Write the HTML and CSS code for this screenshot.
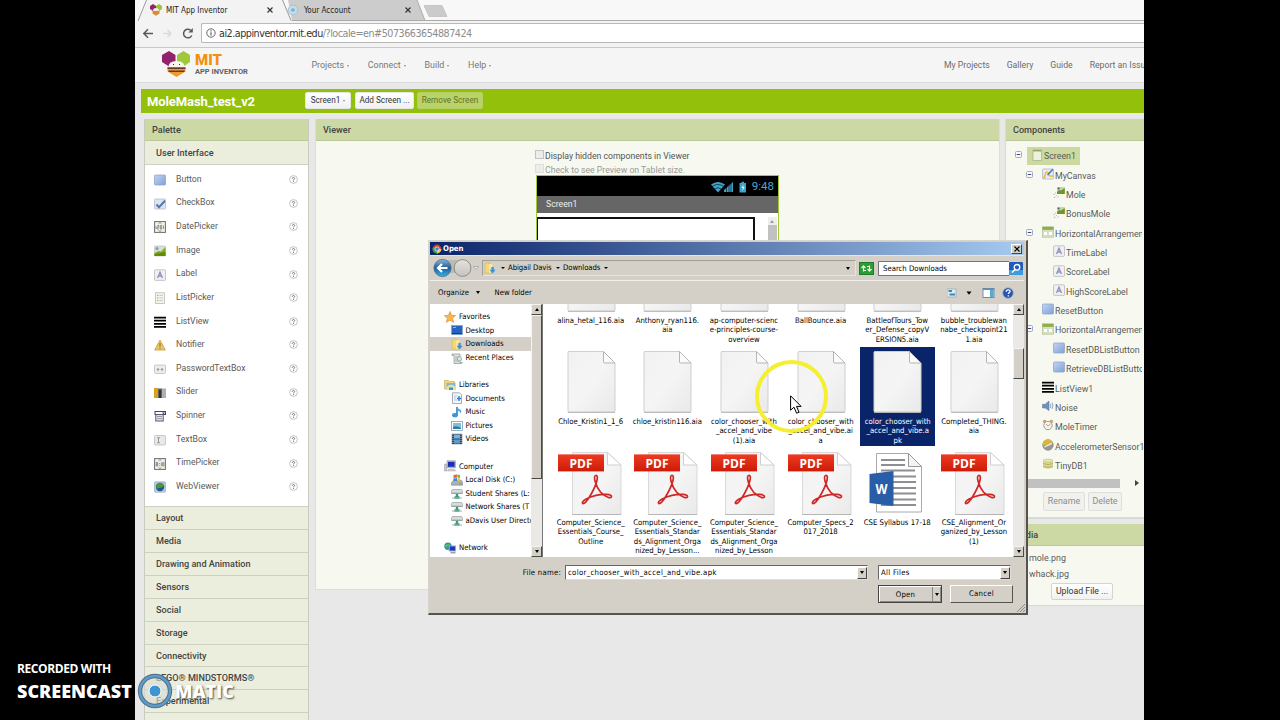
FILE: index.html
```html
<!DOCTYPE html>
<html lang="en">
<head>
<meta charset="utf-8">
<title>MIT App Inventor</title>
<link rel="stylesheet" href="styles.css">
</head>
<body>
<svg class="defs" aria-hidden="true">
  <defs>
    <linearGradient id="gBlue" x1="0" y1="0" x2="1" y2="1"><stop offset="0" stop-color="#c3d6f3"/><stop offset="1" stop-color="#7f9fd6"/></linearGradient>
    <linearGradient id="gPage" x1="0" y1="0" x2="1" y2="1"><stop offset="0" stop-color="#f1f1f1"/><stop offset=".5" stop-color="#f5f5f5"/><stop offset="1" stop-color="#e9e9e9"/></linearGradient>
    <linearGradient id="gRed" x1="0" y1="0" x2="0" y2="1"><stop offset="0" stop-color="#ee3a20"/><stop offset="1" stop-color="#cc1b08"/></linearGradient>
    <linearGradient id="gNav" x1="0" y1="0" x2="0" y2="1"><stop offset="0" stop-color="#8fb6d6"/><stop offset=".5" stop-color="#1c5f9c"/><stop offset="1" stop-color="#37b4e6"/></linearGradient>
    <linearGradient id="gOff" x1="0" y1="0" x2="0" y2="1"><stop offset="0" stop-color="#e4e2de"/><stop offset="1" stop-color="#c6c3bd"/></linearGradient>
  </defs>
  <symbol id="button" viewBox="0 0 12 12"><rect x=".5" y="1" width="11" height="10" rx="1" fill="url(#gBlue)" stroke="#8ea6d0" stroke-width=".8"/></symbol>
  <symbol id="check" viewBox="0 0 12 12"><rect x=".5" y="1" width="11" height="10" rx="1" fill="#dde4ef" stroke="#b5bdcb" stroke-width=".8"/><path d="M2.5 6.5 5 9.3 11 2.8" fill="none" stroke="#5278b5" stroke-width="2"/></symbol>
  <symbol id="date" viewBox="0 0 12 12"><rect x=".6" y=".6" width="10.8" height="10.8" fill="#f2f2ec" stroke="#6c6c6c"/><path d="M2 5v3M3.3 4.5h1.5v1.7H3.3V8h1.6M6.3 4.5v3.5h1.4V4.5ZM9.6 4.5V8M4.5 2.8 6 1.5l1.5 1.3M4.5 9.3 6 10.6l1.5-1.3" fill="none" stroke="#77776c" stroke-width=".8"/></symbol>
  <symbol id="image" viewBox="0 0 12 12"><rect x=".5" y="1" width="11" height="10" rx=".8" fill="#d5dfdf" stroke="#b6beb0" stroke-width=".6"/><path d="M.5 8 4.5 6 7 6.4 11.5 2v9H.5Z" fill="#86ad18"/><path d="M.5 9 11.5 7v4H.5Z" fill="#5f8c10"/><circle cx="3" cy="3.4" r="1.5" fill="#8d99a5"/></symbol>
  <symbol id="label" viewBox="0 0 12 12"><rect x=".5" y=".8" width="11" height="10.6" rx="1" fill="#f0f0f3" stroke="#b9b9c1" stroke-width=".8"/><path d="M3.5 9 6 3.2 8.5 9M4.5 7h3" fill="none" stroke="#9190bd" stroke-width="1.3"/></symbol>
  <symbol id="listpicker" viewBox="0 0 12 12"><rect x="1.5" y=".8" width="9" height="10.6" fill="#f4f4ec" stroke="#bcbcb0" stroke-width=".8"/><path d="M3 3.4h1.3M3 6h1.3M3 8.6h1.3" stroke="#92ad56"/><path d="M5.3 3.4H9M5.3 6H9M5.3 8.6H9" stroke="#bbb" stroke-width=".8"/></symbol>
  <symbol id="listview" viewBox="0 0 12 12"><path d="M0 1.6h12M0 4.7h12M0 7.8h12M0 10.9h12" stroke="#000" stroke-width="1.8"/></symbol>
  <symbol id="notifier" viewBox="0 0 12 12"><path d="M6 1 11.3 11H.7Z" fill="#efc55d" stroke="#c39a44" stroke-width=".8" stroke-linejoin="round"/><path d="M6 4v3.7M6 8.7V10" stroke="#8d7a3f" stroke-width="1.2"/></symbol>
  <symbol id="password" viewBox="0 0 12 12"><rect x=".5" y="2" width="11" height="8.5" rx="1" fill="#ececec" stroke="#bfbfbf" stroke-width=".8"/><circle cx="4" cy="6.4" r="1.2" fill="#999"/><circle cx="8" cy="6.4" r="1.2" fill="#999"/></symbol>
  <symbol id="slider" viewBox="0 0 12 12"><rect y="1" width="4" height="10" fill="#d7a21c"/><rect x="4" y="1.5" width="4" height="9.5" fill="#6b6355"/><rect x="5" y="3" width="2" height="8" fill="#333"/><rect x="8" y="1.5" width="4" height="9.5" fill="#b1b1b1"/></symbol>
  <symbol id="spinner" viewBox="0 0 12 12"><rect x="1" y="1.5" width="10.5" height="3" fill="#fff" stroke="#44445a"/><path d="M8 2.5h3l-1.5 2Z" fill="#3d3da0"/><rect x="1.8" y="4.6" width="7.4" height="6.4" fill="#eee" stroke="#55556a"/><path d="M3 6.6h5M3 8.7h5" stroke="#77778b" stroke-width=".8"/></symbol>
  <symbol id="textbox" viewBox="0 0 12 12"><rect x=".5" y="1.5" width="11" height="9.5" rx="1" fill="#e9e9e9" stroke="#bdbdbd" stroke-width=".8"/><path d="M3 3.8h3M3 8.7h3M4.5 3.8v4.9" stroke="#888" stroke-width=".8"/></symbol>
  <symbol id="time" viewBox="0 0 12 12"><rect x=".6" y=".6" width="10.8" height="10.8" fill="#f2f2ec" stroke="#6c6c6c"/><path d="M2.2 4.500h1.500V8H2.200ZM2.200 6.200h1.500M5.500 5v.8M5.500 7v.8M7.300 4.500V8M8.700 4.500h1.200V8H8.700ZM4.500 2.800 6 1.500l1.500 1.300M4.500 9.300 6 10.600l1.500-1.300" fill="none" stroke="#77776c" stroke-width=".8"/></symbol>
  <symbol id="web" viewBox="0 0 12 12"><rect x=".5" y=".8" width="11" height="10.4" rx="1" fill="#b6cae8" stroke="#90a5c5" stroke-width=".6"/><circle cx="6" cy="6" r="4.2" fill="#24598a"/><path d="M3 3.4C5 1 9 2 9.8 4.5 8 8 5 6 3 8 1.8 6 2 4.5 3 3.4Z" fill="#4f9a35"/></symbol>
  <symbol id="help" viewBox="0 0 9 9"><circle cx="4.5" cy="4.5" r="3.9" fill="#fff" stroke="#aaa" stroke-width=".7"/><path d="M3.2 3.7C3.3 2 5.8 2.2 5.6 3.7 5.4 4.5 4.5 4.4 4.5 5.4M4.5 6.1v.9" fill="none" stroke="#666" stroke-width=".9"/></symbol>
  <symbol id="screen" viewBox="0 0 12 12"><rect x="2" y="1" width="8.5" height="10.5" fill="#eef1dc" stroke="#a9b68b" stroke-width=".8"/><path d="M2 1.7h8.5" stroke="#92a86c" stroke-width="1.5"/></symbol>
  <symbol id="canvas" viewBox="0 0 12 12"><rect x=".6" y="1" width="10.8" height="10" rx="1" fill="#e9edf3" stroke="#a3b6cd" stroke-width=".8"/><path d="M1 10C5 10 1.5 4 5 4S4 9 11 8" fill="none" stroke="#efbd3b" stroke-width="1.6"/><path d="M5.5 7 11 1.2" stroke="#4776b4" stroke-width="1.5"/></symbol>
  <symbol id="sprite" viewBox="0 0 12 12"><rect x="4" y="0" width="7.8" height="7" fill="#c4d4b0"/><path d="M4 4.8 6.5 3 8 3.5 11.8 1v6H4Z" fill="#6f962d"/><circle cx="5.6" cy="1.5" r="1" fill="#555"/><path d="M.5 8 3 5.5M1 11 4 8M4.5 10.5 6 9" stroke="#9a9a9a" stroke-width=".8" stroke-dasharray="1.5 .8"/></symbol>
  <symbol id="horiz" viewBox="0 0 12 12"><rect x=".4" y=".8" width="11.2" height="10.4" fill="#d7dfc3" stroke="#aab98b" stroke-width=".6"/><path d="M.5 2.4h11" stroke="#8fae4b" stroke-width="3"/><rect x="2" y="6" width="3" height="3" fill="#fff"/><rect x="7" y="6" width="3" height="3" fill="#fff"/></symbol>
  <symbol id="sound" viewBox="0 0 12 12"><path d="M.5 4.3h2.7L7 1v9.6L3.2 8H.5Z" fill="#6f91bf" stroke="#527399" stroke-width=".5"/><path d="M8.4 4q1 2 0 4M10 2.5q1.7 3.2 0 6.6" fill="none" stroke="#97a8c0"/></symbol>
  <symbol id="clock" viewBox="0 0 12 12"><circle cx="2.7" cy="2.5" r="1.8" fill="#c9a36c"/><circle cx="9.3" cy="2.5" r="1.8" fill="#c9a36c"/><circle cx="6" cy="6.5" r="4.2" fill="#f5f3ee" stroke="#a59c8b"/><path d="M4 5l2 2 2.5-2" fill="none" stroke="#b5886b" stroke-width=".8"/></symbol>
  <symbol id="accel" viewBox="0 0 12 12"><circle cx="6" cy="6" r="5.3" fill="#979797" stroke="#777" stroke-width=".5"/><path d="M.8 6.5A5.2 5.2 0 0 1 10.7 3.5L6 6Z" fill="#d8b53c"/><path d="M2.5 8 10 4.3" stroke="#eee" stroke-width="1.3"/></symbol>
  <symbol id="db" viewBox="0 0 12 12"><path d="M1 2.8v6.7q5 2.4 10 0V2.8Z" fill="#d9d78f"/><ellipse cx="6" cy="2.7" rx="5" ry="1.5" fill="#ebe9b3" stroke="#bab76b" stroke-width=".6"/><path d="M1 5.5q5 2.3 10 0M1 8.3q5 2.3 10 0" fill="none" stroke="#aeab62" stroke-width=".8"/></symbol>
  <symbol id="fold" viewBox="0 0 7 7"><rect x=".5" y=".5" width="6" height="6" rx="1" fill="#f7f8fb" stroke="#9a9fbc" stroke-width=".9"/><path d="M1.8 3.5h3.4" stroke="#3f4380"/></symbol>

  <symbol id="star" viewBox="0 0 12 12"><path d="M6 .5 7.6 4.3 11.7 4.6 8.6 7.3 9.6 11.4 6 9.2 2.4 11.4 3.4 7.3.3 4.6 4.4 4.3Z" fill="#f9b74a" stroke="#e0872b" stroke-width=".6"/></symbol>
  <symbol id="desktop" viewBox="0 0 12 12"><rect x=".5" y="1.5" width="11" height="9" fill="#2762be" stroke="#83a5d1" stroke-width=".8"/><path d="M1 9.6h10" stroke="#123a76"/><path d="M2 3.4h3" stroke="#8cc1f2"/></symbol>
  <symbol id="downloads" viewBox="0 0 12 12"><path d="M1 1.5 5 .6V2h3v9H1Z" fill="#f3d878" stroke="#cfae4f" stroke-width=".5"/><path d="M5 2.2 8.5 1.5V10L5 11Z" fill="#f8e6a2"/><path d="M7.4 5h2.4v2.7H11.7L8.6 11.6 5.5 7.7h1.9Z" fill="#3c92d4"/></symbol>
  <symbol id="recent" viewBox="0 0 12 12"><path d="M1 2h8v8.5h2.5l-1 1H3V3.5H1Z" fill="#e2e5e2" stroke="#879394" stroke-width=".7"/><path d="M4 5h4M4 7h4M4 9h4" stroke="#98a6a8" stroke-width=".8"/><circle cx="8.5" cy="6.8" r="2.2" fill="#d9e8e7" stroke="#6d8f8b" stroke-width=".6"/></symbol>
  <symbol id="libraries" viewBox="0 0 12 12"><path d="M.5 1.5h4l1 1h5V10H.5Z" fill="#f0d67a" stroke="#c3a654" stroke-width=".6"/><path d="M2.5 4h9v7h-9Z" fill="#7dbbd1"/><path d="M2.5 8Q7 3.5 11.5 8v3h-9Z" fill="#e5e3a4"/><path d="M5 11V8.5h4V11" fill="#4795bf"/></symbol>
  <symbol id="doc" viewBox="0 0 12 12"><path d="M1.5.8h7l2 2v8.7h-9Z" fill="#f5f8fb" stroke="#8d98a5" stroke-width=".8"/><path d="M3 4h3M3 6h2M3 8h3" stroke="#9ab5d6" stroke-width=".8"/><path d="M8 4v5M6 6.5h4" stroke="#3978c0" stroke-width="1.4"/></symbol>
  <symbol id="music" viewBox="0 0 12 12"><path d="M6 1v8" stroke="#237ec2" stroke-width="1.6"/><path d="M6 .5Q7 3 10 4 10.8 6 9.5 7.5 9.5 5 6 4.5Z" fill="#4ba6df"/><ellipse cx="4" cy="9.2" rx="2.9" ry="2.1" fill="#3c96d3"/></symbol>
  <symbol id="pictures" viewBox="0 0 12 12"><rect x=".5" y="1.5" width="11" height="9" fill="#fff" stroke="#7a9cbd" stroke-width=".8"/><rect x="2" y="3" width="8" height="6" fill="#77c0e8"/><path d="M2 9V7.2Q5 5 10 8v1Z" fill="#387a86"/></symbol>
  <symbol id="videos" viewBox="0 0 12 12"><rect x=".8" y=".8" width="10.4" height="10.4" fill="#34495e"/><rect x="3" y="1.5" width="6" height="4" fill="#73b5e2"/><rect x="3" y="6.5" width="6" height="4" fill="#5a9bd0"/><path d="M1.9 1v10M10.1 1v10" stroke="#ccd6df" stroke-dasharray="1 1" stroke-width=".8"/></symbol>
  <symbol id="computer" viewBox="0 0 12 12"><rect x="3" y=".8" width="8.6" height="7" fill="#b9bfd0" stroke="#8690a4" stroke-width=".5"/><rect x="4" y="1.8" width="6.6" height="5" fill="#1c2fb2"/><path d="M.6 4v7h2V4Z" fill="#cbced4" stroke="#868b93" stroke-width=".5"/><path d="M4.5 9h6l1 2h-8Z" fill="#d3d6db" stroke="#8c9096" stroke-width=".4"/></symbol>
  <symbol id="disk" viewBox="0 0 12 12"><path d="M.5 8.5 2.5 6.5h8l1.2 2v2.7H.5Z" fill="#aab1b6" stroke="#6c7478" stroke-width=".5"/><path d="M8 9.8h2.5" stroke="#47c940"/><path d="M2.5 1 6 .5v3L2.5 4Z" fill="#e56431"/><path d="M6.4.6 9 1v3l-2.6-.4Z" fill="#77b83b"/><path d="M2.3 4.5 6 4v3H2.3Z" fill="#4f87d0"/><path d="M6.4 4.1 9.2 4.5V7H6.4Z" fill="#f1c131"/></symbol>
  <symbol id="netdrive" viewBox="0 0 12 12"><path d="M1.500 1.500h9l1.200 1.500v2.500H.3V3Z" fill="#d7dddd" stroke="#889392" stroke-width=".6"/><path d="M1 5.200h10" stroke="#8fa19d"/><path d="M6 5.700v4M3.500 9.500h5" stroke="#3f9c76" stroke-width="2.400"/><path d="M1 10h10" stroke="#8bb9a8"/></symbol>
  <symbol id="network" viewBox="0 0 12 12"><circle cx="4" cy="4.3" r="3.7" fill="#2e91b7"/><path d="M1 3.5Q3 1 6 2 4 5 2 5.800Z" fill="#5dbb5b"/><rect x="5.3" y="4" width="6.2" height="5" fill="#2036b9" stroke="#9aa6c3"/><path d="M6.5 10.8h5" stroke="#6f7788"/></symbol>
  <symbol id="page" viewBox="0 0 76 68"><path d="M15.5 5.5h35L62 17v48q0 1-1 1H16q-1 0-1-1V6Z" fill="url(#gPage)" stroke="#cfcfcf"/><path d="M50.5 5.5V16q0 1 1 1H62Z" fill="#fbfbfb" stroke="#b5b5b5"/><path d="M15 66.4h47" stroke="#b9b9b9"/></symbol>
  <symbol id="pdf" viewBox="0 0 76 68"><path d="M19.5 5.5h35L68 18v50H19.5Z" fill="url(#gPage)" stroke="#d9d9d9"/><path d="M54.5 5.5V18H68Z" fill="#fff" stroke="#cfcfcf"/><path d="M19.5 67.7H68" stroke="#aaa"/><rect x="5" y="7.4" width="46" height="17" fill="url(#gRed)"/><path d="M42.500 28.500c3.500-1 2 7-4 18C34 55 30.500 57.500 29.500 56.200 28.200 54.500 35 50 43 48.300c8-1.700 15.500-1 15.500 1.200 0 2.500-6 .8-11-4.500-4.500-5-7.500-15.500-5-16.500Z" fill="none" stroke="#cf2927" stroke-width="1.700"/></symbol>
  <symbol id="word" viewBox="0 0 76 68"><path d="M17.500 6.500h32l13 13v45.500h-45Z" fill="#fff" stroke="#aaa"/><path d="M49.500 6.500v13h13Z" fill="#f4f4f4" stroke="#999"/><path d="M22 13h24M22 18h24M22 23.500h34M30 29.500h27M30 35h27M30 41h27M30 46.500h27M30 52.500h27M22 58h35" stroke="#8e8e94" stroke-width="1.800"/><path d="M10.500 27 34.500 24v35l-24-3Z" fill="#285da8"/></symbol>
</svg>

<main class="capture">
  <div class="tabs">
    <svg class="tabs-art" viewBox="0 0 1009 22"><path d="M153 0H282l8 20.500H157Z" fill="#ccc"/><path d="M147 0 156 20.500H1009M282 0l8 20.500" fill="none" stroke="#aaa"/><path d="M0 21h4L12 0h136l9 21Z" fill="#f3f3f3"/><path d="M3 21 11.500 0M147.500 0 156 20.500" fill="none" stroke="#9b9b9b"/><path d="M289 5.500h18l5 11h-18Z" fill="#cbcbcb" stroke="#bbb" stroke-width=".7"/></svg>
    <div class="tab"><svg class="i12" viewBox="0 0 12 12"><path d="M0 2 3 0l3 2v3L3 7 0 5Z" fill="#93226d"/><path d="M6 2 9 0l3 2v3L9 7 6 5Z" fill="#9fc13d"/><path d="M2.500 6.500h7v3L6 11.800 2.500 9.500Z" fill="#dc8a36"/><path d="M3 6.800q0-2.800 3-2.800t3 2.800Z" fill="#eee"/></svg><span>MIT App Inventor</span><svg class="x" viewBox="0 0 6 6"><path d="m.5.5 5 5m0-5-5 5" stroke="#333" stroke-width="1.200"/></svg></div>
    <div class="tab second"><svg class="i12" viewBox="0 0 12 12"><circle cx="6" cy="6" r="4.800" fill="#c9dce6" stroke="#9dc5da"/><circle cx="6" cy="6" r="1.800" fill="#6fb2d6"/></svg><span>Your Account</span><svg class="x" viewBox="0 0 6 6"><path d="m.5.5 5 5m0-5-5 5" stroke="#333" stroke-width="1.200"/></svg></div>
  </div>
  <div class="toolbar">
    <svg class="nav-art" viewBox="0 0 66 26"><path d="M18 12.500H9M13 8.300 8.800 12.500l4.200 4.200" fill="none" stroke="#5a5a5a" stroke-width="1.500"/><path d="M28 12.500h8M32.500 9l3.500 3.500-3.500 3.500" fill="none" stroke="#d9d9d9" stroke-width="1.400"/><path d="M56.700 14.500A4.300 4.300 0 1 1 55.700 9.300" fill="none" stroke="#5a5a5a" stroke-width="1.500"/><path d="M57.800 7v4.500h-4.500Z" fill="#5a5a5a"/></svg>
    <div class="url"><svg class="i10" viewBox="0 0 10 10"><circle cx="5" cy="5" r="4.200" fill="none" stroke="#666"/><path d="M5 4.300v3.200M5 2.300v1.100" stroke="#555" stroke-width="1.100"/></svg><span>ai2.appinventor.mit.edu<i>/?locale=en#5073663654887424</i></span></div>
  </div>
  <header class="mit">
    <svg class="logo" viewBox="0 0 30 28"><path d="M1 5 8 1l6.500 4v7L8 16.500 1 12Z" fill="#93226d"/><path d="M16 5 22.500 1 29 5v7l-6.500 4.500L16 12Z" fill="#a1c83c"/><path d="M6.500 17h18v4.500L15.500 27 6.500 21.500Z" fill="#ed9a32"/><path d="M7.500 17q0-6 8-6t8 6Z" fill="#faf6ec"/><path d="M6.500 18.300h18M7.500 21.300h16" stroke="#6a3926" stroke-width="1.500"/><path d="M12 14.500h1M18 14.500h1" stroke="#333" stroke-width="1.200"/></svg>
    <div class="brand"><b>MIT</b><span>APP INVENTOR</span></div>
    <nav class="menu"><span>Projects<i></i></span><span>Connect<i></i></span><span>Build<i></i></span><span>Help<i></i></span></nav>
    <nav class="links"><span>My Projects</span><span>Gallery</span><span>Guide</span><span>Report an Issue</span></nav>
  </header>
  <div class="project"><h1>MoleMash_test_v2</h1><span class="btn s1">Screen1<i></i></span><span class="btn s2">Add Screen ...</span><span class="btn off s3">Remove Screen</span></div>
  <div class="workspace">
    <section class="palette">
      <h2>Palette</h2>
      <h3 class="first">User Interface</h3>
      <div class="items">
        <div><svg><use href="#button"/></svg><span>Button</span><svg class="q"><use href="#help"/></svg></div>
        <div><svg><use href="#check"/></svg><span>CheckBox</span><svg class="q"><use href="#help"/></svg></div>
        <div><svg><use href="#date"/></svg><span>DatePicker</span><svg class="q"><use href="#help"/></svg></div>
        <div><svg><use href="#image"/></svg><span>Image</span><svg class="q"><use href="#help"/></svg></div>
        <div><svg><use href="#label"/></svg><span>Label</span><svg class="q"><use href="#help"/></svg></div>
        <div><svg><use href="#listpicker"/></svg><span>ListPicker</span><svg class="q"><use href="#help"/></svg></div>
        <div><svg><use href="#listview"/></svg><span>ListView</span><svg class="q"><use href="#help"/></svg></div>
        <div><svg><use href="#notifier"/></svg><span>Notifier</span><svg class="q"><use href="#help"/></svg></div>
        <div><svg><use href="#password"/></svg><span>PasswordTextBox</span><svg class="q"><use href="#help"/></svg></div>
        <div><svg><use href="#slider"/></svg><span>Slider</span><svg class="q"><use href="#help"/></svg></div>
        <div><svg><use href="#spinner"/></svg><span>Spinner</span><svg class="q"><use href="#help"/></svg></div>
        <div><svg><use href="#textbox"/></svg><span>TextBox</span><svg class="q"><use href="#help"/></svg></div>
        <div><svg><use href="#time"/></svg><span>TimePicker</span><svg class="q"><use href="#help"/></svg></div>
        <div><svg><use href="#web"/></svg><span>WebViewer</span><svg class="q"><use href="#help"/></svg></div>
      </div>
      <h3>Layout</h3><h3>Media</h3><h3>Drawing and Animation</h3><h3>Sensors</h3><h3>Social</h3><h3>Storage</h3><h3>Connectivity</h3><h3>LEGO® MINDSTORMS®</h3><h3>Experimental</h3><h3>&nbsp;</h3>
    </section>
    <section class="viewer">
      <h2>Viewer</h2>
      <div class="checks"><div><i></i>Display hidden components in Viewer</div><div class="dim"><i></i>Check to see Preview on Tablet size.</div></div>
      <div class="phone">
        <div class="status"><svg viewBox="0 0 38 12"><path d="M0 3.500q7-5 14 0L7 11.500Z" fill="#3fa3cc"/><path d="M1 5.500q6-4 12 0M3.500 8q3.500-2.500 7 0" fill="none" stroke="#0a1a22" stroke-width=".7"/><path d="M13 11V9l9-8v10Z" fill="#3fa3cc"/><path d="M15.500 1v10M18 1v10M20 1v10" stroke="#000" stroke-width=".6"/><path d="M28.500 2h2V.800h2.500V2h2v9.500h-6.500Z" fill="#3fa3cc"/><path d="m32.500 3.500-2 3.500h1.500l-.7 3 2.300-4h-1.500Z" fill="#fff"/></svg><span>9:48</span></div>
        <div class="title">Screen1</div>
        <div class="body"><div class="stage"></div><div class="sb"><i></i></div></div>
      </div>
    </section>
    <section class="right">
      <div class="components">
        <h2>Components</h2>
        <div class="tree">
          <div class="l0"><svg class="f"><use href="#fold"/></svg><span class="sel"><svg><use href="#screen"/></svg>Screen1</span></div>
          <div class="l1"><svg class="f"><use href="#fold"/></svg><svg><use href="#canvas"/></svg>MyCanvas</div>
          <div class="l2"><svg><use href="#sprite"/></svg>Mole</div>
          <div class="l2"><svg><use href="#sprite"/></svg>BonusMole</div>
          <div class="l1"><svg class="f"><use href="#fold"/></svg><svg><use href="#horiz"/></svg><span class="cut">HorizontalArrangement1</span></div>
          <div class="l2"><svg><use href="#label"/></svg>TimeLabel</div>
          <div class="l2"><svg><use href="#label"/></svg>ScoreLabel</div>
          <div class="l2"><svg><use href="#label"/></svg>HighScoreLabel</div>
          <div class="l1 nf"><svg><use href="#button"/></svg>ResetButton</div>
          <div class="l1"><svg class="f"><use href="#fold"/></svg><svg><use href="#horiz"/></svg><span class="cut">HorizontalArrangement2</span></div>
          <div class="l2"><svg><use href="#button"/></svg>ResetDBListButton</div>
          <div class="l2"><svg><use href="#button"/></svg><span class="cut narrow">RetrieveDBListButton</span></div>
          <div class="l1 nf"><svg><use href="#listview"/></svg>ListView1</div>
          <div class="l1 nf"><svg><use href="#sound"/></svg>Noise</div>
          <div class="l1 nf"><svg><use href="#clock"/></svg>MoleTimer</div>
          <div class="l1 nf"><svg><use href="#accel"/></svg>AccelerometerSensor1</div>
          <div class="l1 nf"><svg><use href="#db"/></svg>TinyDB1</div>
        </div>
        <div class="hscroll"><i></i><b></b></div>
        <div class="acts"><span>Rename</span><span>Delete</span></div>
      </div>
      <div class="media"><h2>Media</h2><p>mole.png</p><p>whack.jpg</p><span class="btn">Upload File ...</span></div>
    </section>
  </div>
</main>

<div class="dialog">
  <div class="caption"><svg viewBox="0 0 12 12"><circle cx="6" cy="6" r="5.300" fill="#db3c2f"/><path d="M6 6 1.300 3.500A5.300 5.300 0 0 0 6.500 11.300Z" fill="#37a14b"/><path d="M6 6h5.300A5.300 5.300 0 0 1 6 11.300Z" fill="#f3cb35"/><circle cx="6" cy="6" r="2.500" fill="#3a7be0" stroke="#fff" stroke-width=".8"/></svg><b>Open</b><span class="close"><svg viewBox="0 0 8 8"><path d="m1.500 1.500 5 5m0-5-5 5" stroke="#000" stroke-width="1.200"/></svg></span></div>
  <div class="address">
    <svg class="navbtns" viewBox="0 0 48 22"><rect x="8" y="3" width="28" height="13" rx="6" fill="#bcbab5"/><circle cx="11.500" cy="11" r="8.600" fill="url(#gNav)" stroke="#4a6a86" stroke-width=".8"/><path d="M16.500 11H7.500M11 7l-4 4 4 4" fill="none" stroke="#fff" stroke-width="2.200"/><circle cx="31.500" cy="11" r="8.400" fill="url(#gOff)" stroke="#8f8d89"/><path d="M42.500 9.500h5l-2.500 3Z" fill="#eee" stroke="#999" stroke-width=".7"/></svg>
    <div class="crumb"><svg class="i12"><use href="#downloads"/></svg><i class="dn"></i><span>Abigail Davis</span><i class="dn"></i><span>Downloads</span><i class="dn"></i><i class="dn end"></i></div>
    <svg class="refresh" viewBox="0 0 15 13"><rect x=".5" y=".5" width="14" height="12" fill="#2c9c33" stroke="#1d7d29"/><path d="M4.500 9.500V4.500M2.500 6l2-2.200L6.500 6M4.500 8.500H7M10.500 3.500v5M8.500 7l2 2.200 2-2.200M10.500 4.500H8" fill="none" stroke="#e4f9e2" stroke-width="1.200"/></svg>
    <div class="search">Search Downloads</div>
    <svg class="go" viewBox="0 0 14 13"><rect width="14" height="13" rx="1" fill="#235cb8"/><path d="M0 8h14v5H0Z" fill="#3d9bdf"/><circle cx="8" cy="5.300" r="2.800" fill="#2b59c0" stroke="#fff" stroke-width="1.300"/><path d="M6 7.500 3 10.500" stroke="#fff" stroke-width="1.700"/></svg>
  </div>
  <div class="tools"><span>Organize</span><i class="dn big"></i><span class="nf2">New folder</span>
    <svg class="view" viewBox="0 0 68 14"><rect x="0" y="3" width="9" height="8" fill="#dceaf2" stroke="#8faabb" stroke-width=".7"/><path d="M1.500 5h3.500M2.500 8.500h5.500" stroke="#3b8bb0" stroke-width="1.800"/><path d="M19.500 5.500h5l-2.500 3.200Z" fill="#000"/><rect x="36" y="2.500" width="11" height="9" fill="#fff" stroke="#6585a2" stroke-width=".9"/><path d="M36 3.200h11" stroke="#5b89b5" stroke-width="1.500"/><rect x="43" y="4" width="3.600" height="7" fill="#5aa8d0"/><circle cx="61" cy="7" r="5.300" fill="#2e55ad" stroke="#9baecf" stroke-width=".8"/><path d="M59.200 5.800q0-2 2-2t1.800 1.700c0 1-1.700 1-1.700 2.500M61.300 9.200v1.200" fill="none" stroke="#fff" stroke-width="1.300"/></svg>
  </div>
  <div class="content">
    <div class="side">
      <div class="list">
        <div class="top"><svg><use href="#star"/></svg>Favorites</div>
        <div><svg><use href="#desktop"/></svg>Desktop</div>
        <div class="on"><svg><use href="#downloads"/></svg>Downloads</div>
        <div><svg><use href="#recent"/></svg>Recent Places</div>
        <div></div>
        <div class="top"><svg><use href="#libraries"/></svg>Libraries</div>
        <div><svg><use href="#doc"/></svg>Documents</div>
        <div><svg><use href="#music"/></svg>Music</div>
        <div><svg><use href="#pictures"/></svg>Pictures</div>
        <div><svg><use href="#videos"/></svg>Videos</div>
        <div></div>
        <div class="top"><svg><use href="#computer"/></svg>Computer</div>
        <div><svg><use href="#disk"/></svg>Local Disk (C:)</div>
        <div><svg><use href="#netdrive"/></svg>Student Shares (L:</div>
        <div><svg><use href="#netdrive"/></svg>Network Shares (T</div>
        <div><svg><use href="#netdrive"/></svg>aDavis User Directo</div>
        <div></div>
        <div class="top"><svg><use href="#network"/></svg>Network</div>
      </div>
      <div class="vs"><span class="up"></span><span class="thumb a"></span><span class="down"></span></div>
    </div>
    <div class="files">
      <div class="grid">
        <div><svg><use href="#page"/></svg><p>alina_hetal_116.aia</p></div>
        <div><svg><use href="#page"/></svg><p>Anthony_ryan116.<br>aia</p></div>
        <div><svg><use href="#page"/></svg><p>ap-computer-scienc<br>e-principles-course-<br>overview</p></div>
        <div><svg><use href="#page"/></svg><p>BallBounce.aia</p></div>
        <div><svg><use href="#page"/></svg><p>BattleofTours_Tow<br>er_Defense_copyV<br>ERSION5.aia</p></div>
        <div><svg><use href="#page"/></svg><p>bubble_troublewan<br>nabe_checkpoint21<br>1.aia</p></div>
        <div><svg><use href="#page"/></svg><p>Chloe_Kristin1_1_6</p></div>
        <div><svg><use href="#page"/></svg><p>chloe_kristin116.aia</p></div>
        <div><svg><use href="#page"/></svg><p>color_chooser_with<br>_accel_and_vibe<br>(1).aia</p></div>
        <div><svg><use href="#page"/></svg><p>color_chooser_with<br>_accel_and_vibe.ai<br>a</p></div>
        <div class="picked"><svg><use href="#page"/></svg><p>color_chooser_with<br>_accel_and_vibe.a<br>pk</p></div>
        <div><svg><use href="#page"/></svg><p>Completed_THING.<br>aia</p></div>
        <div><svg viewBox="0 0 76 68"><use href="#pdf"/><text class="pdf" x="28" y="20.500" textLength="23" lengthAdjust="spacingAndGlyphs">PDF</text></svg><p>Computer_Science_<br>Essentials_Course_<br>Outline</p></div>
        <div><svg viewBox="0 0 76 68"><use href="#pdf"/><text class="pdf" x="28" y="20.500" textLength="23" lengthAdjust="spacingAndGlyphs">PDF</text></svg><p>Computer_Science_<br>Essentials_Standar<br>ds_Alignment_Orga<br>nized_by_Lesson...</p></div>
        <div><svg viewBox="0 0 76 68"><use href="#pdf"/><text class="pdf" x="28" y="20.500" textLength="23" lengthAdjust="spacingAndGlyphs">PDF</text></svg><p>Computer_Science_<br>Essentials_Standar<br>ds_Alignment_Orga<br>nized_by_Lesson</p></div>
        <div><svg viewBox="0 0 76 68"><use href="#pdf"/><text class="pdf" x="28" y="20.500" textLength="23" lengthAdjust="spacingAndGlyphs">PDF</text></svg><p>Computer_Specs_2<br>017_2018</p></div>
        <div><svg viewBox="0 0 76 68"><use href="#word"/><text class="w" x="22.500" y="46.500" textLength="12" lengthAdjust="spacingAndGlyphs">W</text></svg><p>CSE Syllabus 17-18</p></div>
        <div><svg viewBox="0 0 76 68"><use href="#pdf"/><text class="pdf" x="28" y="20.500" textLength="23" lengthAdjust="spacingAndGlyphs">PDF</text></svg><p>CSE_Alignment_Or<br>ganized_by_Lesson<br>(1)</p></div>
      </div>
      <div class="vs"><span class="up"></span><span class="thumb b"></span><span class="down"></span></div>
    </div>
  </div>
  <div class="footer">
    <div class="line"><label>File name:</label><div class="combo name">color_chooser_with_accel_and_vibe.apk<span class="drop"></span></div><div class="combo type">All Files<span class="drop"></span></div></div>
    <div class="line end"><span class="wbtn open"><em>Open</em><i class="dn big"></i></span><span class="wbtn cancel">Cancel</span></div>
  </div>
  <svg class="grip" viewBox="0 0 9 9"><path d="M1 9 9 1M4 9l5-5M7 9l2-2" stroke="#8c8984"/></svg>
</div>

<div class="ring"></div>
<svg class="cursor" viewBox="0 0 12 20"><path d="M.6.800v14.400l3.400-3 2.600 6 2.400-1-2.500-5.800h4.600Z" fill="#fff" stroke="#000"/></svg>
<div class="watermark"><p>RECORDED WITH</p><div><b>SCREENCAST</b><svg viewBox="0 0 36 36"><circle cx="18" cy="18" r="15" fill="#d9dcd3" fill-opacity=".65" stroke="#4f6f88" stroke-width="4.400"/><circle cx="18" cy="18" r="15" fill="none" stroke="#5c9ccb" stroke-width="2.400"/><circle cx="18" cy="18" r="6" fill="#3f95d2" stroke="#fff"/></svg><b>MATIC</b></div></div>
</body>
</html>
```

FILE: styles.css
```css
* { box-sizing: border-box; }
body { margin: 0; width: 1280px; height: 720px; background: #000; overflow: hidden; position: relative; font: 8.700px/1.2 Roboto, sans-serif; color: #5a5a5a; }
h1, h2, h3, p { margin: 0; }
i, em { font-style: normal; }
svg { flex: none; display: block; }
.defs { position: absolute; width: 0; height: 0; }
.i12 { width: 12px; height: 12px; }
.i10 { width: 10px; height: 10px; }
.capture { margin-left: 135px; width: 1009px; height: 720px; overflow: hidden; background: #e8e8e9; display: flex; flex-direction: column; }

.tabs { height: 21px; flex: none; background: #f8f8f8; position: relative; display: flex; font: 8px "DejaVu Sans Condensed", "DejaVu Sans", sans-serif; color: #222; }
.tabs-art { position: absolute; left: 0; top: 0; width: 1009px; height: 22px; }
.tab { position: relative; display: flex; align-items: center; width: 138px; height: 20px; padding-left: 15px; gap: 4px; }
.tab.second { width: 138px; padding-left: 14px; gap: 5px; }
.tab span { flex: 1; }
.tab .x { width: 6px; height: 6px; }
.toolbar { height: 27px; flex: none; display: flex; background: #f3f3f3; border-bottom: 1px solid #c8c8c8; }
.nav-art { width: 66px; height: 26px; }
.url { flex: 1; height: 20px; margin-top: 2px; border: 1px solid #b9b9b9; border-right: 0; background: #fff; display: flex; align-items: center; gap: 3px; padding-left: 4px; font: 9.600px "DejaVu Sans", sans-serif; letter-spacing: -.48px; color: #333; border-radius: 2px 0 0 2px; }
.url i { color: #8b8b8b; }

.mit { height: 35px; flex: none; background: #f5f5f5; border-bottom: 1px solid #dcdcdc; display: flex; align-items: center; }
.logo { width: 30px; height: 28px; margin: -3px 0 0 26px; }
.brand { margin-left: 4px; display: flex; flex-direction: column; width: 55px; flex: none; }
.brand b { font: 900 15px/13px Roboto, sans-serif; color: #f29111; }
.brand span { font: 700 7.500px/10px Roboto, sans-serif; color: #636363; white-space: nowrap; }
.menu { margin-left: 61.500px; margin-top: 1px; display: flex; flex: none; gap: 18.800px; font-size: 8.900px; color: #777; width: 632.500px; }
.menu i, .btn i { display: inline-block; margin-left: 3px; border: 1.500px solid transparent; border-top: 2.500px solid #888; border-bottom: 0; vertical-align: middle; }
.links { display: flex; flex: none; gap: 17px; white-space: nowrap; color: #6c6c6c; }
.project { margin: 6px 0 0 6px; height: 24px; flex: none; background: #93c10b; display: flex; align-items: center; }
.project h1 { font: 700 13px Roboto, sans-serif; color: #fff; width: 164px; padding-left: 6px; letter-spacing: -.1px; }
.btn { height: 17px; border-radius: 2px; background: linear-gradient(#fff, #f1f1f1); border: 1px solid #e6e6e6; color: #333; display: flex; align-items: center; justify-content: center; white-space: nowrap; font-size: 8.200px; }
.project .btn { margin-top: -1px; }
.s1 { width: 46px; } .s2 { width: 59px; margin-left: 4px; } .s3 { width: 66px; margin-left: 3px; }
.btn.off { background: #b9d36a; border-color: #b5cf62; color: #5e7322; }

.workspace { display: flex; margin: 6px 0 0 9px; flex: 1; min-height: 0; width: 1040px; }
h2 { height: 22px; background: #ccd9a5; border-bottom: 1px solid #bcc898; font: 500 9.100px/22px Roboto, sans-serif; color: #444; padding-left: 7px; }
.palette { width: 165px; flex: none; border: 1px solid #c8cbbd; border-top: 0; background: #fff; height: 640px; }
h3 { height: 22.900px; background: #eceedd; border-bottom: 1px solid #ced0c4; font: 500 9.100px/23px Roboto, sans-serif; color: #444; padding-left: 11px; }
h3.first { height: 23.500px; line-height: 24px; }
.items { height: 342.700px; padding-top: 2.700px; border-bottom: 1px solid #ced0c4; }
.items div { height: 23.630px; display: flex; align-items: center; padding-left: 9px; }
.items svg { width: 12px; height: 12px; margin-top: 2px; }
.items span { width: 123px; padding-left: 10px; }
.items svg.q { width: 9px; height: 9px; margin-top: 1px; }
.viewer { width: 685px; height: 471px; margin-left: 6px; flex: none; background: #f7f9f0; border: 1px solid #dcdfd2; border-top: 0; }
.checks { margin: 8px 0 0 219px; color: #555; }
.checks div { display: flex; height: 14px; align-items: center; white-space: nowrap; margin-top: .3px; }
.checks i { width: 9px; height: 9px; border: 1px solid #c3c3c0; background: #ececea; margin: -4px 1px 0 0; }
.checks .dim { color: #999; } .checks .dim i { border-color: #ddd; }
.phone { width: 243px; height: 300px; margin: -2px 0 0 220px; border: 1px solid #a4c639; background: #fff; }
.status { height: 20px; background: #000; display: flex; align-items: center; justify-content: flex-end; gap: 3px; padding: 1px 4px 0 0; font-size: 11.500px; color: #4fa9cf; }
.status svg { width: 38px; height: 12px; }
.title { height: 17px; background: #666; color: #eee; line-height: 16px; padding-left: 9px; }
.body { display: flex; padding-top: 4px; justify-content: space-between; }
.stage { width: 218px; height: 200px; border: 2px solid #111; border-left-width: 1px; }
.sb { width: 9px; height: 200px; margin-right: 1px; background: #c1c1c1; border-top: 8px solid #eee; position: relative; }
.sb i { position: absolute; left: 2px; top: -5px; border: 2.500px solid transparent; border-bottom: 3px solid #999; border-top: 0; }

.right { margin-left: 5px; width: 160px; flex: none; }
.components, .media { background: #f7f9f0; border-left: 1px solid #d8dbcf; }
.components { height: 400px; border-bottom: 2px solid #d9d9d9; }
.tree { height: 337.500px; padding-top: 4px; }
.tree > div { height: 19.350px; display: flex; align-items: center; font-size: 8.800px; padding-top: 4px; white-space: nowrap; }
.tree svg { width: 12px; height: 12px; margin: -4px 1px 0 0; }
.tree svg.f { width: 7px; height: 7px; }
.tree .sel { display: flex; align-items: center; background: #ccd9a0; height: 18px; margin-top: -2px; padding: 2px 4px 0 4px; }
.l0 { padding-left: 9px; } .tree .l0 svg.f { margin-right: 5px; }
.l1 { padding-left: 20px; } .tree .l1 svg.f { margin-right: 9px; }
.nf { padding-left: 36px; }
.l2 { padding-left: 47px; }
.cut { display: block; width: 87px; overflow: hidden; } .cut.narrow { width: 76px; }
.hscroll { height: 9px; display: flex; align-items: center; }
.hscroll i { width: 114px; height: 9px; background: #c1c1c1; }
.hscroll b { margin-left: 15px; border: 3px solid transparent; border-left: 4px solid #444; border-right: 0; }
.acts { display: flex; gap: 3px; padding: 4px 0 0 37px; }
.acts span { height: 19px; width: 42px; display: flex; align-items: center; justify-content: center; border: 1px solid #dedede; border-radius: 2px; background: #f1f1ee; color: #8d8d8d; font-size: 8.900px; }
.acts span + span { width: 34px; }
.media { margin-top: 5px; height: 82px; border-bottom: 1px solid #d6d6d6; }
.media p { font-size: 8.900px; line-height: 16px; height: 15.800px; padding-left: 23px; }
.media p:first-of-type { margin-top: 4px; }
.media .btn { width: 62px; margin: 1px 0 0 45px; font-size: 8.700px; border-color: #d4d4d4; }

/* File chooser window */
.dialog { position: absolute; left: 428px; top: 240px; width: 600px; height: 375px; background: #d4d0c8; border: 1px solid #d8d5ce; border-right: 2px solid #55534f; border-bottom: 2px solid #55534f; padding: 1px 2px 0 1px; font: 7.700px/9.300px "DejaVu Sans Condensed", "DejaVu Sans", sans-serif; color: #000; display: flex; flex-direction: column; }
.caption { height: 13px; background: linear-gradient(90deg, #0a246a, #a6caf0); display: flex; align-items: center; color: #fff; padding: 0 2px; gap: 1px; flex: none; }
.caption > svg { width: 10px; height: 10px; }
.caption b { flex: 1; }
.close { width: 11px; height: 10px; background: #d4d0c8; border: 1px solid; border-color: #fff #444 #444 #fff; display: grid; place-items: center; }
.close svg { width: 8px; height: 8px; }
.address { height: 26px; flex: none; display: flex; align-items: center; border-bottom: 1px solid #f2f0ec; border-top: 1px solid #e8e6e0; }
.navbtns { width: 48px; height: 22px; margin-left: 1px; }
.crumb { margin-left: 3px; width: 374px; height: 16px; border: 1px solid #b6b3ac; border-color: #a09d97 #e6e4df #e6e4df #a09d97; display: flex; align-items: center; padding-left: 1px; letter-spacing: -.1px; }
.dn { display: inline-block; border: 2.200px solid transparent; border-top: 2.600px solid #000; border-bottom: 0; margin: 0 3.500px 0 4px; }
.crumb .dn:first-of-type { margin-left: 4.500px; }
.crumb .end, .big { border-width: 3px 2.800px 0; }
.crumb .end { margin-left: auto; margin-right: 5px; }
.refresh { width: 15px; height: 13px; margin-left: 3px; }
.search { margin-left: 4px; height: 15px; width: 131px; background: #fff; border: 1px solid #777; border-right: 0; padding-left: 4px; line-height: 14px; }
.go { width: 14px; height: 13px; }
.tools { height: 23px; flex: none; display: flex; align-items: center; padding-left: 8px; }
.tools .big { margin-left: 7px; } .nf2 { margin-left: 11px; }
.view { width: 68px; height: 14px; margin-left: auto; margin-right: 9px; }
.content { height: 253px; flex: none; display: flex; }
.side { width: 113px; flex: none; background: #fff; display: flex; border-right: 1px solid #777; }
.list { flex: 1; min-width: 0; overflow: hidden; padding-top: 6px; height: 253px; }
.list div { height: 13.600px; display: flex; align-items: center; gap: 2.500px; padding-left: 21px; white-space: nowrap; width: 130px; }
.list .top { padding-left: 14px; gap: 3px; }
.list .on { background: #d4d0c8; }
.list svg { width: 12px; height: 12px; }
.vs { width: 11px; height: 253px; background: #ebe9e5; display: flex; flex-direction: column; flex: none; position: relative; }
.vs span { background: #d4d0c8; border: 1px solid; border-color: #f5f3f0 #4c4a46 #4c4a46 #f5f3f0; height: 11px; display: grid; place-items: center; }
.vs .down { margin-top: auto; }
.up::before, .down::before, .drop::before { content: ""; border: 2.600px solid transparent; border-bottom: 3px solid #000; border-top: 0; }
.down::before, .drop::before { border: 2.600px solid transparent; border-top: 3px solid #000; border-bottom: 0; }
.vs .a { height: 164px; }
.vs .b { margin-top: 33px; height: 31px; }
.files { flex: 1; background: #fff; display: flex; overflow: hidden; height: 253px; min-width: 0; }
.grid { flex: none; margin: -59px 0 0 9.700px; width: 459px; display: grid; grid-template-columns: repeat(6, 76.650px); grid-auto-rows: 101px; height: 303px; }
.grid > div { text-align: center; height: 100px; width: 76px; }
.grid svg { width: 76px; height: 68px; }
.grid p { white-space: nowrap; padding-top: 3px; line-height: 9.300px; }
.grid .picked { background: #0a246a; color: #fff; margin: 1px 0 0 1px; height: 99px; width: 75px; }
.grid .picked svg { margin: -1px 0 0 -1px; }
.files .vs { margin-left: auto; }
.pdf { font: 700 13px "Open Sans", sans-serif; fill: #fff; text-anchor: middle; }
.w { font: 700 14px "Open Sans", sans-serif; fill: #fff; text-anchor: middle; }
.footer { padding-top: 8px; display: flex; flex-direction: column; gap: 5px; }
.line { display: flex; }
.line.end { padding-left: 448px; gap: 8px; }
.footer label { width: 131px; text-align: right; padding: 3px 0 0; margin-right: 4px; letter-spacing: .25px; }
.combo { height: 15px; background: #fff; border: 1px solid; border-color: #666 #ddd #ddd #666; display: flex; align-items: center; justify-content: space-between; padding-left: 2px; letter-spacing: .32px; }
.name { width: 303px; }
.type { width: 133px; margin-left: 10px; }
.drop { height: 12px; width: 10px; background: #d4d0c8; border: 1px solid; border-color: #fff #444 #444 #fff; display: grid; place-items: center; }
.wbtn { height: 18px; border: 1px solid; border-color: #fff #55534f #55534f #fff; display: flex; align-items: center; justify-content: center; letter-spacing: .25px; }
.open { width: 64px; border-color: #444; box-shadow: inset 1px 1px #fff, inset -1px -1px #888; }
.open em { flex: 1; text-align: center; border-right: 1px solid #888; line-height: 15px; }
.open .dn { margin: 0 2px; }
.cancel { width: 63px; }
.grip { position: absolute; right: 1px; bottom: 1px; width: 9px; height: 9px; }

/* Recorder overlays */
.ring { position: absolute; left: 755px; top: 360px; width: 73px; height: 73px; border: 4px solid #f5ef2f; border-radius: 50%; }
.cursor { position: absolute; left: 790px; top: 395px; width: 12px; height: 20px; }
.watermark { position: absolute; left: 17px; top: 660px; color: #fff; font: 700 12px/17px "Open Sans", sans-serif; white-space: nowrap; text-shadow: 1px 1px 2px rgba(0, 0, 0, .7); }
.watermark p { letter-spacing: -.4px; }
.watermark div { display: flex; align-items: center; height: 36px; margin-top: -4px; font-size: 18px; }
.watermark svg { width: 36px; height: 36px; margin: 0 2px 0 4px; }
.watermark b:first-child { width: 116px; }
```
